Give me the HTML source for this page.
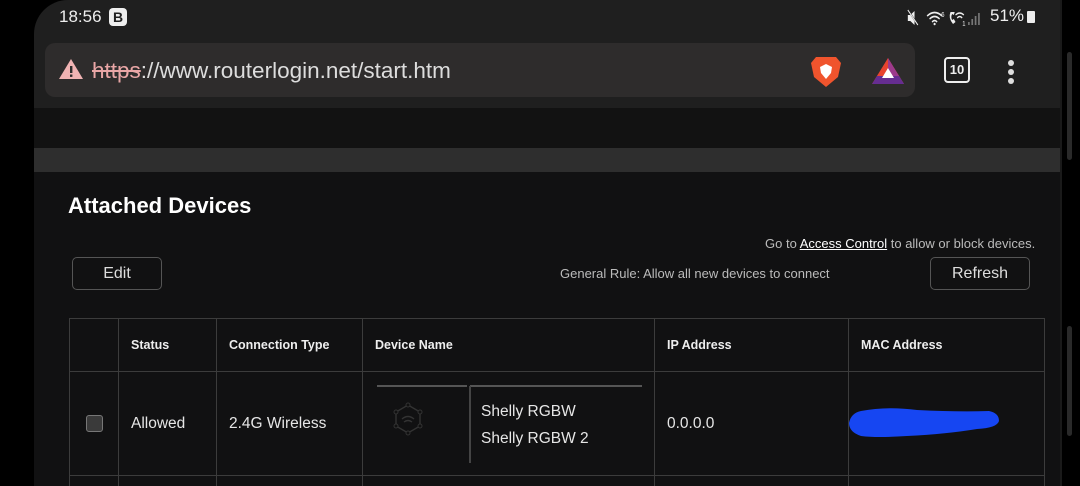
<!DOCTYPE html>
<html><head><meta charset="utf-8"><style>
*{margin:0;padding:0;box-sizing:border-box}
body{width:1080px;height:486px;background:#000;position:relative;overflow:hidden;font-family:"Liberation Sans",sans-serif;color:#ddd}
.scr{position:absolute;left:34px;top:0;width:1026px;height:486px;background:#1f1f1f;border-top-left-radius:34px;overflow:hidden}
.abs{position:absolute}
.url{left:11px;top:43px;width:870px;height:54px;background:#2e2c2c;border-radius:10px}
.band1{left:0;top:108px;width:1026px;height:40px;background:#121212}
.band2{left:0;top:148px;width:1026px;height:24px;background:#2e2e2e}
.content{left:0;top:172px;width:1026px;height:314px;background:#111112}
.btn{border:1px solid #555;border-radius:5px;color:#ddd;font-size:16px;text-align:center}
table{position:absolute;left:35px;top:146px;border-collapse:collapse;font-size:15.5px}
td{border:1.5px solid #3c3c3c;padding-left:12px;color:#e6e6e6}
th{border:1.5px solid #3c3c3c;text-align:left;padding-left:12px;font-size:12.5px;font-weight:bold;color:#eee}
</style></head><body>
<div class="scr">
 <div class="abs" style="left:25px;top:7px;font-size:17px;color:#eee">18:56</div>
 <div class="abs" style="left:75px;top:8px;width:18px;height:18px;background:#eee;border-radius:4px;color:#1f1f1f;font-weight:bold;font-size:14px;text-align:center;line-height:18px">B</div>
 <svg class="abs" style="left:873px;top:8px" width="92" height="20" viewBox="0 0 110 20" preserveAspectRatio="none">
  <g fill="#eee"><path d="M1 7H4L9 3V17L4 13H1Z"/></g>
  <path d="M2 3L13 17" stroke="#1f1f1f" stroke-width="1.8"/>
  <path d="M1 2L13 17" stroke="#eee" stroke-width="1.2"/>
  <g fill="none" stroke="#eee" stroke-width="1.6"><path d="M24 8Q33 1 42 8"/><path d="M27 11Q33 6 39 11"/><path d="M30 14Q33 11 36 14"/></g>
  <circle cx="33" cy="16" r="1.3" fill="#eee"/>
  <text x="41" y="9" font-size="7" fill="#eee" font-family="Liberation Sans">6</text>
  <path d="M52 4Q49 10 55 16L58 14L56 11L54 12Q52 9 54 6L56 7L57 4Z" fill="#eee"/>
  <g fill="none" stroke="#eee" stroke-width="1.4"><path d="M58 7Q63 3 68 7"/><path d="M60 10Q63 7 66 10"/></g>
  <text x="66" y="18" font-size="7" fill="#eee" font-family="Liberation Sans">1</text>
  <g fill="#777"><rect x="73" y="14" width="2" height="3"/><rect x="77" y="11" width="2" height="6"/><rect x="81" y="8" width="2" height="9"/><rect x="85" y="5" width="2" height="12"/></g>
 </svg>
 <div class="abs" style="left:956px;top:6px;font-size:17px;color:#eee">51%</div>
 <div class="abs" style="left:993px;top:11px;width:8px;height:12px;background:#eee;border-radius:1px"></div>
 <div class="abs url">
  <svg class="abs" style="left:13px;top:15px" width="26" height="22" viewBox="0 0 26 22"><path d="M13 1L25 21H1Z" fill="#f0b3b3"/><rect x="12" y="8" width="2.4" height="7" fill="#2e2c2c"/><rect x="12" y="16.5" width="2.4" height="2.4" fill="#2e2c2c"/></svg>
  <div class="abs" style="left:47px;top:15px;font-size:22.5px;color:#ddd"><span style="color:#e9a6a6;text-decoration:line-through">https</span>://www.routerlogin.net/start.htm</div>
  <svg class="abs" style="left:765px;top:12px" width="32" height="34" viewBox="0 0 32 34"><path d="M6 2H26L31 8L28 22L16 32L4 22L1 8Z" fill="#f0542d"/><path d="M10 12L16 9L22 12L21 18L16 24L11 18Z" fill="#fff"/></svg>
  <svg class="abs" style="left:826px;top:14px" width="34" height="28" viewBox="0 0 34 28"><path d="M17 1L33 27H1Z" fill="#e8442f"/><path d="M17 1L33 27H17Z" fill="#9c3a8c"/><path d="M1 27H33L28 19H6Z" fill="#662d91"/><path d="M17 11L23 21H11Z" fill="#fff"/></svg>
 </div>
 <div class="abs" style="left:910px;top:57px;width:26px;height:26px;border:2px solid #eee;border-radius:4px;font-size:13px;font-weight:bold;color:#eee;text-align:center;line-height:22px">10</div>
 <div class="abs" style="left:974px;top:60px;width:6px;height:6px;background:#ddd;border-radius:3px;box-shadow:0 9px #ddd,0 18px #ddd"></div>
 <div class="abs band1"></div><div class="abs band2"></div>
 <div class="abs content">
  <div class="abs" style="left:34px;top:21px;font-size:22px;font-weight:bold;color:#fff">Attached Devices</div>
  <div class="abs" style="left:731px;top:64px;font-size:13px;color:#bbb">Go to <span style="color:#fff;text-decoration:underline">Access Control</span> to allow or block devices.</div>
  <div class="abs btn" style="left:38px;top:85px;width:90px;height:33px;line-height:31px">Edit</div>
  <div class="abs" style="left:526px;top:94px;font-size:13px;color:#bbb">General Rule: Allow all new devices to connect</div>
  <div class="abs btn" style="left:896px;top:85px;width:100px;height:33px;line-height:31px">Refresh</div>
  <table>
   <tr style="height:53px"><th style="width:49px"></th><th style="width:98px">Status</th><th style="width:146px">Connection Type</th><th style="width:292px">Device Name</th><th style="width:194px">IP Address</th><th style="width:196px">MAC Address</th></tr>
   <tr style="height:104px">
    <td style="padding-left:16px"><div style="width:17px;height:17px;border:1.5px solid #777;background:#3a3a3a;border-radius:3px"></div></td>
    <td>Allowed</td><td>2.4G Wireless</td>
    <td style="position:relative;padding:0">
     <div class="abs" style="left:14px;top:13px;width:90px;height:1.5px;background:#555"></div>
     <div class="abs" style="left:107px;top:13px;width:172px;height:1.5px;background:#555"></div>
     <div class="abs" style="left:106px;top:14px;width:1.5px;height:77px;background:#444"></div>
     <svg class="abs" style="left:29px;top:30px" width="32" height="34" viewBox="0 0 32 34"><g fill="none" stroke="#333" stroke-width="1.4"><path d="M16 3L28 10V24L16 31L4 24V10Z"/><path d="M10 17Q16 12 22 17M12 20Q16 17 20 20"/></g><g fill="#111" stroke="#333"><circle cx="16" cy="3" r="2"/><circle cx="28" cy="10" r="2"/><circle cx="28" cy="24" r="2"/><circle cx="16" cy="31" r="2"/><circle cx="4" cy="24" r="2"/><circle cx="4" cy="10" r="2"/></g></svg>
     <div class="abs" style="left:118px;top:26px;line-height:27px;color:#e6e6e6">Shelly RGBW<br>Shelly RGBW 2</div>
    </td>
    <td>0.0.0.0</td>
    <td style="padding:0;position:relative"><svg class="abs" style="left:-2px;top:34px" width="156" height="34" viewBox="0 0 156 34"><path d="M14 5Q40 0 70 4Q110 6 142 5Q152 7 152 15Q150 22 130 23Q100 28 60 30Q30 32 14 30Q2 26 2 17Q4 7 14 5Z" fill="#1646f2"/></svg></td>
   </tr>
   <tr style="height:20px"><td></td><td></td><td></td><td></td><td></td><td></td></tr>
  </table>
 </div>
</div>
<div class="abs" style="left:1060px;top:0;width:2px;height:486px;background:#1a1a1a"></div>
<div class="abs" style="left:1067px;top:52px;width:5px;height:108px;background:#2a2a2a;border-radius:3px"></div>
<div class="abs" style="left:1067px;top:326px;width:5px;height:110px;background:#2a2a2a;border-radius:3px"></div>
</body></html>
